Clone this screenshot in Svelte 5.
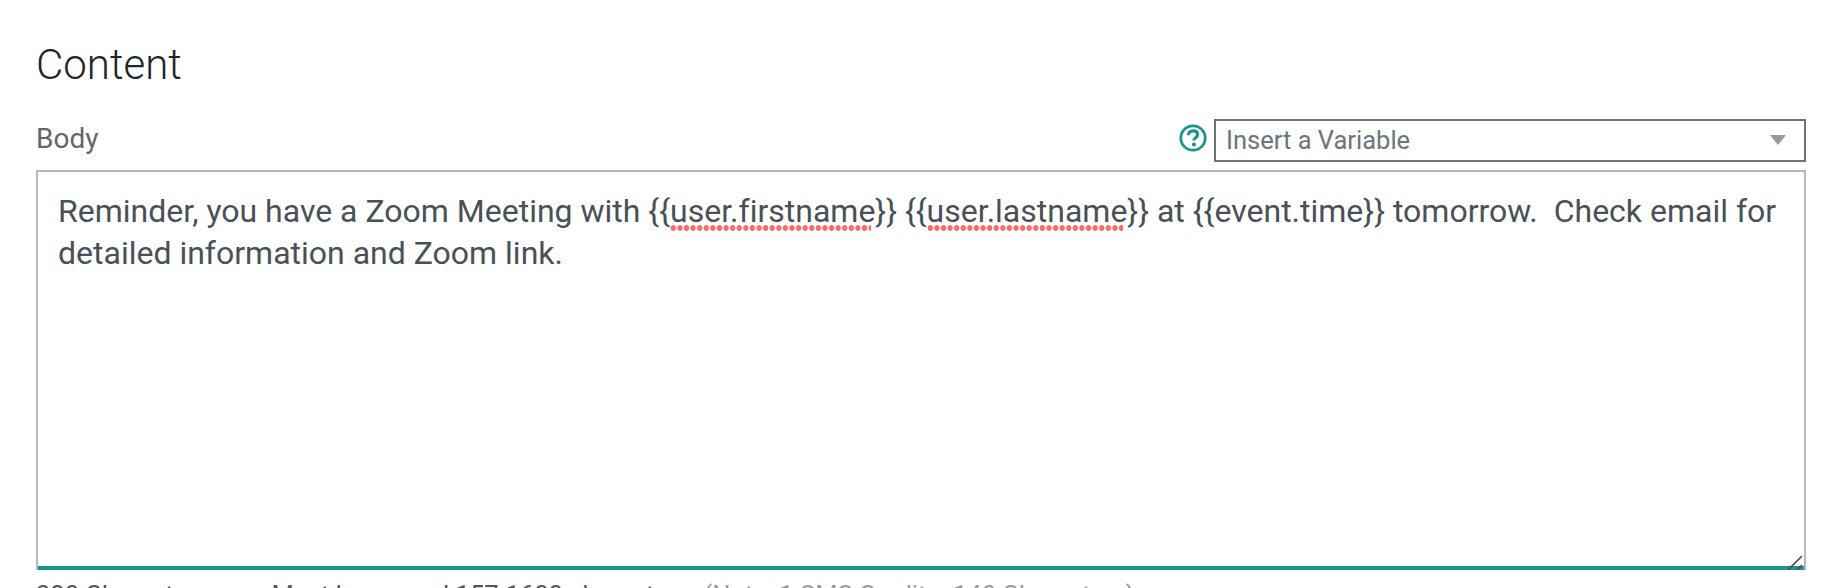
<script>
  const variables = ['Insert a Variable', 'user.firstname', 'user.lastname', 'event.time']
  let selected = $state(variables[0])
</script>

<div class="page">
  <h2 class="heading">Content</h2>

  <div class="field-head">
    <span class="label">Body</span>
    <div class="variable-picker">
      <svg class="help" width="28" height="28" viewBox="0 0 28 28" fill="none">
        <circle cx="14" cy="14" r="12.2" stroke="#1a9688" stroke-width="2.8"></circle>
        <path d="M9.4 11.2c0-2.7 2-4.3 4.7-4.3s4.5 1.5 4.5 3.8c0 3-3.7 3.1-3.7 5.8" stroke="#1a9688" stroke-width="3.2"></path>
        <circle cx="14.9" cy="20.6" r="2" fill="#1a9688"></circle>
      </svg>
      <label class="select">
        <select bind:value={selected}>
          {#each variables as v}
            <option value={v}>{v}</option>
          {/each}
        </select>
        <span class="caret"></span>
      </label>
    </div>
  </div>

  <div class="body-box">
    <p>Reminder, you have a Zoom Meeting with &#123;&#123;<span class="misspelled">user.firstname</span>&#125;&#125; &#123;&#123;<span class="misspelled">user.lastname</span>&#125;&#125; at &#123;&#123;event.time&#125;&#125; tomorrow.&nbsp; Check email for detailed information and Zoom link.</p>
    <svg class="grip" width="16" height="16" viewBox="0 0 16 16">
      <path d="M0 16 14 2M9 16l5-5" stroke="#4a4a4a" stroke-width="1.6" fill="none"></path>
    </svg>
  </div>

  <p class="counter"><span>320 Characters.</span><span class="rule">Must be around 157-1600 characters</span><span class="note">(Note: 1 SMS Credit = 140 Characters)</span></p>
</div>

<style>
  :global(body) {
    background: #fff;
    font-family: Roboto, sans-serif;
  }

  .page {
    height: 588px;
    overflow: hidden;
    padding: 0 18px 0 36px;
    box-sizing: border-box;
  }

  .heading {
    margin: 0;
    padding-top: 39px;
    font-size: 42px;
    line-height: 52px;
    font-weight: 300;
    color: #212529;
  }

  .field-head {
    display: flex;
    align-items: center;
    justify-content: space-between;
    margin-top: 28px;
    height: 43px;
  }

  .label {
    font-size: 28px;
    line-height: 38px;
    margin-bottom: 4px;
    color: #666;
  }

  .variable-picker {
    display: flex;
    align-items: center;
    gap: 7px;
  }

  .help {
    display: block;
    margin-bottom: 6px;
  }

  .select {
    position: relative;
    display: block;
    width: 592px;
    height: 43px;
  }

  select {
    appearance: none;
    width: 100%;
    height: 100%;
    box-sizing: border-box;
    border: 2px solid #737373;
    border-radius: 0;
    background: #fff;
    padding: 0 10px 2px;
    font: 400 25.5px Roboto, sans-serif;
    color: #6c757d;
  }

  .caret {
    position: absolute;
    right: 20px;
    top: 16px;
    border-left: 8px solid transparent;
    border-right: 8px solid transparent;
    border-top: 10px solid #999;
    pointer-events: none;
  }

  .body-box {
    position: relative;
    margin-top: 8px;
    height: 400px;
    box-sizing: border-box;
    border: 2px solid #b7b7b7;
    padding: 18px 20px;
    font-size: 32px;
    line-height: 42px;
    color: #495057;
  }

  .body-box::after {
    content: '';
    position: absolute;
    left: 0;
    right: 0;
    bottom: -2px;
    height: 4px;
    background: #1a9688;
  }

  .body-box p {
    margin: 0;
  }

  .misspelled {
    position: relative;
    font-variant-ligatures: none;
  }

  .misspelled::after {
    content: '';
    position: absolute;
    left: 0;
    right: 4px;
    bottom: -1px;
    height: 6px;
    background: radial-gradient(circle, #ff6b6b 2.6px, transparent 3px) repeat-x left center / 6.6px 6px;
  }

  .grip {
    position: absolute;
    right: 0;
    bottom: -2px;
    z-index: 1;
  }

  .counter {
    margin: 10px 0 0;
    font-size: 25.5px;
    line-height: 30px;
    color: #555;
    white-space: nowrap;
  }

  .rule {
    margin-left: 56px;
  }

  .note {
    margin-left: 14px;
    color: #999;
  }
</style>
